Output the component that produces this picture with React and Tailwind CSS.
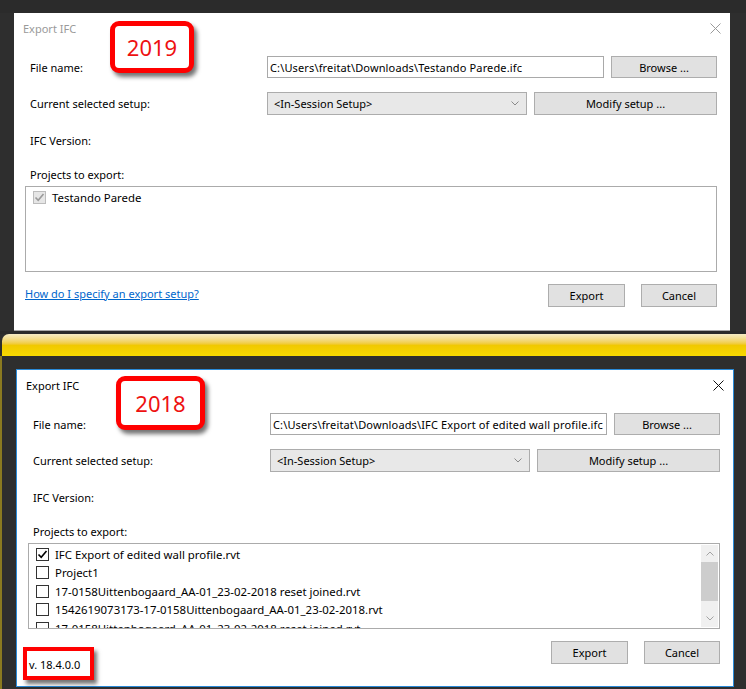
import React from "react";

function CloseX({ color }) {
  return (
    <svg width="11" height="11" viewBox="0 0 11 11">
      <path d="M0.5 0.5 L10.5 10.5 M10.5 0.5 L0.5 10.5" stroke={color} strokeWidth="1" />
    </svg>
  );
}

function Chevron({ up, color = "#7a7a7a" }) {
  return (
    <svg width="8" height="5" viewBox="0 0 8 5">
      <path d={up ? "M0.5 4.5 L4 1 L7.5 4.5" : "M0.5 0.5 L4 4 L7.5 0.5"} stroke={color} strokeWidth="1" fill="none" />
    </svg>
  );
}

function Checkbox({ checked, disabled }) {
  return (
    <span
      className={
        "w-[13px] h-[13px] shrink-0 flex items-center justify-center border " +
        (disabled ? "border-[#bcbcbc] bg-[#e6e6e6]" : "border-[#333333] bg-white")
      }
    >
      {checked && (
        <svg width="11" height="11" viewBox="0 0 11 11">
          <path d="M1.5 5.5 L4.2 8.3 L9.5 2" stroke={disabled ? "#9a9a9a" : "#000"} strokeWidth="1.6" fill="none" />
        </svg>
      )}
    </span>
  );
}

function Btn({ w, h = "h-[22px]", children }) {
  return (
    <div className={w + " " + h + " shrink-0 bg-[#e1e1e1] border border-[#adadad] flex items-center justify-center text-black"}>
      {children}
    </div>
  );
}

function RedBox({ className, children, rounded }) {
  return (
    <div
      className={
        "absolute flex items-center justify-center text-[#ee1111] shadow-[3px_4px_4px_rgba(0,0,0,0.55)] " +
        (rounded ? "bg-white rounded-[9px] border-[5px] border-[#ff0000] " : "border-[4px] border-[#ff0000] ") +
        className
      }
    >
      {children}
    </div>
  );
}

function Dialog({ v2 }) {
  const fileName = v2
    ? "C:\\Users\\freitat\\Downloads\\IFC Export of edited wall profile.ifc"
    : "C:\\Users\\freitat\\Downloads\\Testando Parede.ifc";
  const items = v2
    ? [
        ["IFC Export of edited wall profile.rvt", true],
        ["Project1", false],
        ["17-0158Uittenbogaard_AA-01_23-02-2018 reset joined.rvt", false],
        ["1542619073173-17-0158Uittenbogaard_AA-01_23-02-2018.rvt", false],
        ["17-0158Uittenbogaard_AA-01_23-02-2018 reset joined.rvt", false],
      ]
    : [["Testando Parede", true]];
  return (
    <div className="relative flex flex-col h-full">
      <div className="h-[30px] flex items-center justify-between pl-[9px] pr-[9px]">
        <span className={v2 ? "text-black" : "text-[#9a9a9a]"}>Export IFC</span>
        <CloseX color={v2 ? "#111" : "#9a9a9a"} />
      </div>

      <div className="mt-[13px] h-[22px] flex items-center">
        <span className="w-[253px] shrink-0 pl-[16px]">File name:</span>
        <div className="w-[337px] h-[22px] shrink-0 border border-[#a9a9a9] bg-white flex items-center pl-[2px] overflow-hidden whitespace-nowrap tracking-[0.14px]">
          {fileName}
        </div>
        <div className="ml-[7px]">
          <Btn w="w-[106px]">Browse ...</Btn>
        </div>
      </div>

      <div className="mt-[14px] h-[23px] flex items-center">
        <span className="w-[253px] shrink-0 pl-[16px]">Current selected setup:</span>
        <div className="w-[260px] h-[23px] shrink-0 border border-[#acacac] bg-[#e8e8e8] flex items-center justify-between pl-[6px] pr-[7px]">
          <span>&lt;In-Session Setup&gt;</span>
          <Chevron color="#8a8a8a" />
        </div>
        <div className="ml-[7px]">
          <Btn w="w-[183px]" h="h-[23px]">Modify setup ...</Btn>
        </div>
      </div>

      <div className="mt-[17px] h-[16px] flex items-center pl-[16px]">IFC Version:</div>
      <div className="mt-[18px] h-[16px] flex items-center pl-[16px]">Projects to export:</div>

      <div className="mt-[4px] ml-[11px] w-[692px] h-[86px] border border-[#ababab] bg-white flex overflow-hidden">
        <div className="flex-1 flex flex-col pt-[1px] overflow-hidden text-[11.4px]">
          {items.map(([t, c], i) => (
            <div key={i} className="h-[18.5px] shrink-0 flex items-center pl-[7px] gap-[6px] whitespace-nowrap">
              <Checkbox checked={c} disabled={!v2} />
              <span>{t}</span>
            </div>
          ))}
        </div>
        {v2 && (
          <div className="w-[17px] my-[1px] mr-[1px] bg-[#f0f0f0] flex flex-col">
            <div className="h-[17px] flex items-center justify-center">
              <Chevron up color="#a3a3a3" />
            </div>
            <div className="h-[39px] bg-[#cdcdcd]" />
            <div className="flex-1 flex items-end justify-center pb-[6px]">
              <Chevron color="#a3a3a3" />
            </div>
          </div>
        )}
      </div>

      <div className="mt-[12px] h-[23px] flex items-center justify-between pr-[13px]">
        {v2 ? (
          <span className="pl-[12px] mt-[24px]">v. 18.4.0.0</span>
        ) : (
          <span className="pl-[11px] mb-[5px] text-[#0066cc] underline">How do I specify an export setup?</span>
        )}
        <div className="flex gap-[16px]">
          <Btn w="w-[77px]" h="h-[23px]">Export</Btn>
          <Btn w="w-[76px]" h="h-[23px]">Cancel</Btn>
        </div>
      </div>

      {v2 ? (
        <>
          <RedBox rounded className="left-[99px] top-[6px] w-[89px] h-[54px] text-[22px]">2018</RedBox>
          <RedBox className="left-[6px] top-[277px] w-[71px] h-[33px]" />
        </>
      ) : (
        <RedBox rounded className="left-[96px] top-[8px] w-[84px] h-[52px] text-[22px]">2019</RedBox>
      )}
    </div>
  );
}

export default function App() {
  return (
    <div className="w-[746px] h-[689px] bg-[#2e2e2e] overflow-hidden font-['Noto_Sans','Open_Sans',sans-serif] text-[11px] text-black leading-none">
      <div className="h-[13px] bg-[#2b2b2b]" />
      <div className="flex">
        <div className="ml-[14px] w-[716px] h-[318px] bg-white border-b border-[#a8a8a8]">
          <Dialog />
        </div>
      </div>
      <div className="h-[3px] bg-[#2a2a2a]" />
      <div className="ml-[2px] h-[22px] rounded-tl-[7px] bg-gradient-to-b from-[#f6ebc4] via-[#f0c800] to-[#f8d900]" />
      <div className="h-[333px] border-l-2 border-[#8a7a20] bg-[#2e2e2e] pt-[13px] pl-[14px]">
        <div className="w-[718px] h-[318px] bg-white border border-[#2a8ad8] relative">
          <Dialog v2 />
        </div>
      </div>
    </div>
  );
}
